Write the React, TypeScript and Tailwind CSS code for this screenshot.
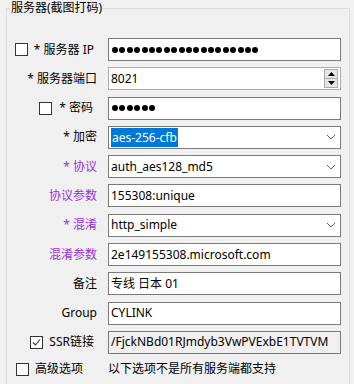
import React from "react"

const purple = "text-[#9b30d6]"

function Box({ checked = false }: { checked?: boolean }) {
  return (
    <span className="w-[13px] h-[13px] border border-[#333333] bg-white flex items-center justify-center shrink-0">
      {checked && (
        <svg width="9" height="9" viewBox="0 0 9 9">
          <polyline points="1,4.5 3.5,7 8,1.5" fill="none" stroke="#333" strokeWidth="1.1" />
        </svg>
      )}
    </span>
  )
}

function Chevron() {
  return (
    <svg width="10" height="6" viewBox="0 0 10 6" className="absolute right-[4px] top-1/2 -translate-y-1/2">
      <polyline points="1,1 5,5 9,1" fill="none" stroke="#606060" strokeWidth="1" />
    </svg>
  )
}

function Field({
  children,
  select = false,
  spin = false,
  readOnly = false,
  light = false,
}: {
  children?: React.ReactNode
  select?: boolean
  spin?: boolean
  readOnly?: boolean
  light?: boolean
}) {
  return (
    <div
      className={
        "relative w-[233px] h-[23px] border flex items-center pl-[2px] overflow-hidden whitespace-nowrap " +
        (light ? "border-[#adadad] " : "border-[#7a7a7a] ") +
        (readOnly ? "bg-[#f0f0f0]" : "bg-white")
      }
    >
      {children}
      {select && <Chevron />}
      {spin && (
        <div className="absolute right-[2px] top-[1px] w-[14px] h-[19px] border border-[#adadad] bg-[#f0f0f0] flex flex-col">
          <div className="flex-1 flex items-center justify-center border-b border-[#adadad] bg-[#e5e5e5]">
            <svg width="7" height="4" viewBox="0 0 7 4"><polygon points="0,4 3.5,0 7,4" fill="#000" /></svg>
          </div>
          <div className="flex-1 flex items-center justify-center bg-[#e5e5e5]">
            <svg width="7" height="4" viewBox="0 0 7 4"><polygon points="0,0 3.5,4 7,0" fill="#000" /></svg>
          </div>
        </div>
      )}
    </div>
  )
}

function Row({ label, children }: { label: React.ReactNode; children: React.ReactNode }) {
  return (
    <div className="flex items-center h-[23px] gap-[11px]">
      <div className="w-[90px] flex items-center justify-end">{label}</div>
      {children}
    </div>
  )
}

// password mask dots
function Dots({ n }: { n: number }) {
  return (
    <span className="flex items-center gap-[1.4px] pl-[1px]">
      {Array.from({ length: n }).map((_, i) => (
        <span key={i} className="w-[6px] h-[6px] rounded-full bg-black" />
      ))}
    </span>
  )
}

export default function App() {
  return (
    <div className="w-[354px] h-[384px] overflow-hidden bg-[#f0f0f0] text-[12px] text-black font-['Noto_Sans','Noto_Sans_CJK_SC',sans-serif] pt-[8px] pl-[6px]">
      <div className="relative w-[344px] h-[400px] border border-[#dcdcdc] pt-[29px]">
        <span className="absolute left-[3px] -top-[9px] px-[1px] bg-[#f0f0f0] leading-[16px]">
          服务器(截图打码)
        </span>

        <div className="flex flex-col gap-[6.3px]">
          <Row
            label={
              <span className="flex items-center gap-[6px] pr-[3px]">
                <Box />
                <span>* 服务器 IP</span>
              </span>
            }
          >
            <Field>
              <Dots n={20} />
            </Field>
          </Row>

          <Row label={<span>* 服务器端口</span>}>
            <Field spin light>
              8021
            </Field>
          </Row>

          <Row
            label={
              <span className="flex items-center gap-[7px] pr-[4px]">
                <Box />
                <span>* 密码</span>
              </span>
            }
          >
            <Field>
              <Dots n={6} />
            </Field>
          </Row>

          <Row label={<span>* 加密</span>}>
            <Field select>
              <span className="bg-[#0078d7] text-white leading-[19px] pl-[1px] pr-[1px]">aes-256-cfb</span>
            </Field>
          </Row>

          <Row label={<span className={purple}>* 协议</span>}>
            <Field select>auth_aes128_md5</Field>
          </Row>

          <Row label={<span className={purple}>协议参数</span>}>
            <Field>155308:unique</Field>
          </Row>

          <Row label={<span className={purple}>* 混淆</span>}>
            <Field select>http_simple</Field>
          </Row>

          <Row label={<span className={purple}>混淆参数</span>}>
            <Field>2e149155308.microsoft.com</Field>
          </Row>

          <Row label={<span>备注</span>}>
            <Field>专线 日本 01</Field>
          </Row>

          <Row label={<span>Group</span>}>
            <Field>CYLINK</Field>
          </Row>

          <Row
            label={
              <span className="flex items-center gap-[6px] pr-[3px]">
                <Box checked />
                <span>SSR链接</span>
              </span>
            }
          >
            <Field readOnly>/FjckNBd01RJmdyb3VwPVExbE1TVTVM</Field>
          </Row>
        </div>

        <div className="flex items-center h-[23px] mt-[4px] pl-[9px]">
          <Box />
          <span className="ml-[6px] w-[73px]">高级选项</span>
          <span>以下选项不是所有服务端都支持</span>
        </div>
      </div>
    </div>
  )
}
